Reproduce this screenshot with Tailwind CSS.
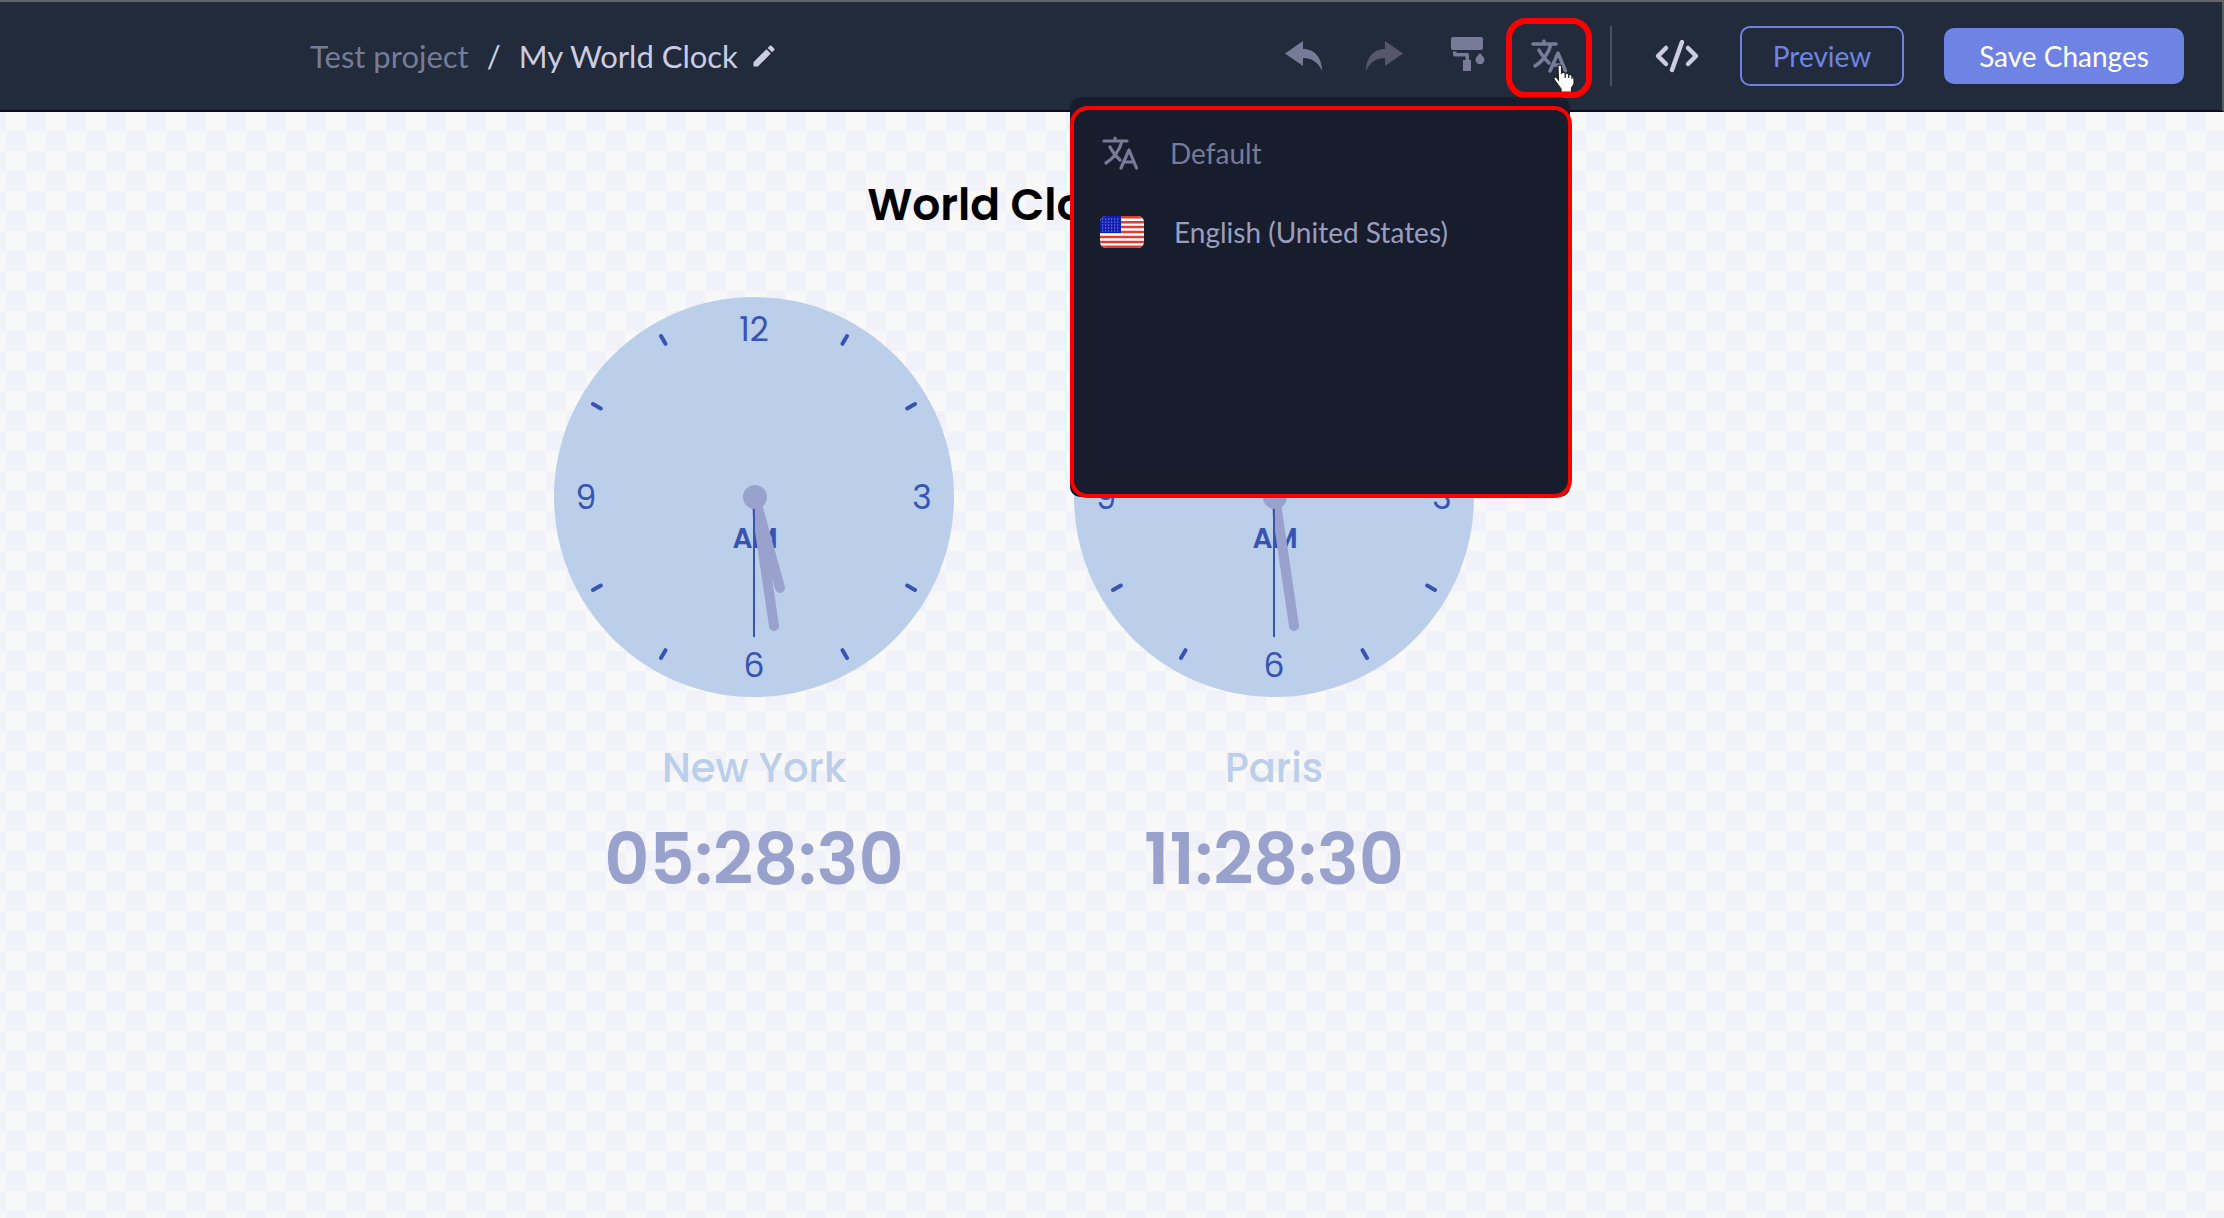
<!DOCTYPE html>
<html lang="en">
<head>
  <meta charset="UTF-8">
  <meta name="viewport" content="width=device-width, initial-scale=1.0">
  <title>My World Clock</title>
  <script src="https://cdn.jsdelivr.net/npm/@tailwindcss/browser@4"></script>
</head>
<body class="min-h-screen flex flex-col bg-[#f8f8f8] font-['Lato',sans-serif]">

  <!-- Top bar -->
  <header class="h-28 shrink-0 flex items-center justify-between pl-[310px] pr-[38px] bg-[#212b3b] border-t-2 border-t-[#666666] border-b-2 border-b-[#0a0c20] border-r-2 border-r-[#575d66]">
    <nav class="flex items-center text-[31px] leading-10 text-[#cccde3]">
      <a href="#" class="text-[#777b97]">Test project</a>
      <span class="mx-[18px]">/</span>
      <span>My World Clock</span>
      <button type="button" aria-label="Rename" class="ml-3">
        <svg class="size-7" viewBox="0 0 24 24" fill="currentColor"><path d="M3 17.25V21h3.75L17.81 9.94l-3.75-3.75L3 17.25zM20.71 7.04a1 1 0 0 0 0-1.41l-2.34-2.34a1 1 0 0 0-1.41 0l-1.83 1.83 3.75 3.75 1.83-1.83z"/></svg>
      </button>
    </nav>

    <div class="flex items-center">
      <button type="button" aria-label="Undo" class="mr-11 text-[#777b97]">
        <svg class="w-[37px] h-[30px]" viewBox="0 0 37 30" fill="currentColor"><path d="M0 12.500 18 0v8C30 8 37 17 37 30 33 21 27 17 18 17v8z"/></svg>
      </button>
      <button type="button" aria-label="Redo" class="mr-12 text-[#55566a]">
        <svg class="w-[37px] h-[30px]" viewBox="0 0 37 30" fill="currentColor"><path d="M37 12.500 19 0v8C7 8 0 17 0 30 4 21 10 17 19 17v8z"/></svg>
      </button>
      <button type="button" aria-label="Theme" class="mr-5 pb-1 text-[#777b97]">
        <svg class="w-[35px] h-[34px]" viewBox="0 0 35 34" fill="currentColor"><rect width="32" height="13" rx="2"/><path d="M2 14.500h3.500V16H16a2 2 0 0 1 2 2v5h2v11h-8V23h2.500v-3.500H4a2 2 0 0 1-2-2zM29 16c2.500 3 4.500 4.500 4.500 6.800a4.500 4.500 0 0 1-9 0C24.500 20.500 26.500 19 29 16z"/></svg>
      </button>

      <div class="relative mt-1">
        <button type="button" aria-label="Languages" aria-expanded="true" class="flex w-[86px] h-20 items-center justify-center rounded-[20px] border-6 border-[#ff0000] pb-1 text-[#777b97]">
          <svg class="w-9 h-[34px]" viewBox="0 0 36 34" fill="none" stroke="currentColor" stroke-width="3.500" stroke-linecap="round" stroke-linejoin="round"><path d="M2 5h23M13 2v3M20 5C18 14 11 23 4 27M8 11c3 6 7 10 10 13M19 32l8-18 7.500 18M22 26h10"/></svg>
        </button>
        <svg class="absolute left-[46px] top-[46px] w-[24px] h-[28px]" viewBox="0 0 24 28" aria-hidden="true"><path d="M6 2c0-1.300 3.500-1.300 3.500 0v7c1-1.200 3.500-.8 3.700.7 1-.9 3.300-.4 3.500 1 1.200-.7 3.300 0 3.300 1.800.9 0 2 .8 2 2.200V20l-2.500 4v4H9v-3l-6.500-9C1 13.500 3 12 4.500 13.500L6.500 16z" fill="#fff" stroke="#222" stroke-width="1.200"/><path d="M13.200 10v4M16.700 11v3M20 12.500V15" stroke="#222" stroke-width="1.200"/></svg>

        <!-- Language menu -->
        <div class="absolute z-10 right-[22px] top-[79px] w-[500px] h-[400px] rounded-[10px] bg-[#171d2d]">
          <ul class="flex flex-col pt-[26px] text-[28px] leading-[60px]">
            <li>
              <button type="button" class="flex w-full items-center gap-8 pl-8 text-[#777b97]">
                <svg class="w-9 h-[34px]" viewBox="0 0 36 34" fill="none" stroke="currentColor" stroke-width="3.200" stroke-linecap="round" stroke-linejoin="round"><path d="M2 5h23M13 2v3M20 5C18 14 11 23 4 27M8 11c3 6 7 10 10 13M19 32l8-18 7.500 18M22 26h10"/></svg>
                <span>Default</span>
              </button>
            </li>
            <li class="pt-[19px]">
              <button type="button" class="flex w-full items-center gap-[30px] pl-[30px] text-[#9a9dbe]">
                <svg class="w-11 h-8 rounded-md" viewBox="0 0 44 32">
                  <rect width="44" height="32" fill="#fff"/>
                  <path d="M0 1.200h44M0 6.200h44M0 11.100h44M0 16h44M0 20.900h44M0 25.900h44M0 30.800h44" stroke="#e03c32" stroke-width="2.500"/>
                  <rect width="21" height="17" fill="#1220b0"/>
                  <path d="M2 3h18M2 6h18M2 9h18M2 12h18M2 15h18" stroke="#8c96e0" stroke-width="1.200" stroke-dasharray="1.200 1.800"/>
                </svg>
                <span>English (United States)</span>
              </button>
            </li>
          </ul>
          <div class="absolute left-0 top-[9px] w-[502px] h-[392px] rounded-[18px] border-4 border-[#ff0000] pointer-events-none"></div>
        </div>
      </div>

      <div class="ml-[18px] mr-[42px] w-[2px] h-[60px] bg-[#4c4f62]"></div>
      <button type="button" aria-label="Source code" class="mr-10 text-[#cccde3]">
        <svg class="w-[46px] h-[34px]" viewBox="0 0 46 34" fill="none" stroke="currentColor" stroke-width="4.500" stroke-linecap="round" stroke-linejoin="round"><path d="M12 9l-8 8 8 8M34 9l8 8-8 8M28 3l-10 28"/></svg>
      </button>
      <button type="button" class="mr-10 w-[164px] h-[60px] rounded-[10px] border-2 border-[#6f83e5] text-[28px] text-[#6f83e5]">Preview</button>
      <button type="button" class="w-60 h-14 rounded-[10px] bg-[#6f83e5] text-[28px] text-white">Save Changes</button>
    </div>
  </header>

  <!-- Widget canvas -->
  <main class="grow flex flex-col items-center pt-[65px] pr-[196px] font-['Poppins','Inter',sans-serif] bg-[repeating-conic-gradient(#f1f1fa_0_25%,#f8f8f8_0_50%)] bg-size-[40px_40px] bg-position-[6px_-1px]">
    <h1 class="text-[44px] leading-[56px] font-semibold text-black">World Clocks</h1>

    <div class="flex gap-[120px] pt-16">
      <section class="flex w-[400px] flex-col items-center">
        <svg class="size-[400px]" viewBox="-200 -200 400 400" role="img" aria-label="New York time">
          <circle r="200" fill="#bbcfea"/>
          <path d="M93 -161l-4.500 7.800M161 -93l-7.800 4.500M161 93l-7.800 -4.500M93 161l-4.500 -7.800M-93 161l4.500 -7.800M-161 93l7.800 -4.500M-161 -93l7.800 4.500M-93 -161l4.500 7.800" stroke="#3754b3" stroke-width="4" stroke-linecap="round"/>
          <g fill="#3754b3" font-size="33" text-anchor="middle">
            <text x="0" y="-156">12</text>
            <text x="168" y="12">3</text>
            <text x="0" y="180">6</text>
            <text x="-168" y="12">9</text>
            <text x="1" y="51" font-size="28" font-weight="600">AM</text>
          </g>
          <path d="M1 0L26 91M1 0L20 129" stroke="#98a2cc" stroke-width="10" stroke-linecap="round"/>
          <path d="M0 0V140" stroke="#3754b3" stroke-width="2"/>
          <circle cx="1" r="12" fill="#98a2cc"/>
        </svg>
        <h2 class="pt-[45px] text-[40px] leading-[52px] font-medium text-[#bbcfea]">New York</h2>
        <p class="pt-6 text-[70px] leading-[84px] font-semibold text-[#98a2cc]">05:28:30</p>
      </section>

      <section class="flex w-[400px] flex-col items-center">
        <svg class="size-[400px]" viewBox="-200 -200 400 400" role="img" aria-label="Paris time">
          <circle r="200" fill="#bbcfea"/>
          <path d="M93 -161l-4.500 7.800M161 -93l-7.800 4.500M161 93l-7.800 -4.500M93 161l-4.500 -7.800M-93 161l4.500 -7.800M-161 93l7.800 -4.500M-161 -93l7.800 4.500M-93 -161l4.500 7.800" stroke="#3754b3" stroke-width="4" stroke-linecap="round"/>
          <g fill="#3754b3" font-size="33" text-anchor="middle">
            <text x="0" y="-156">12</text>
            <text x="168" y="12">3</text>
            <text x="0" y="180">6</text>
            <text x="-168" y="12">9</text>
            <text x="1" y="51" font-size="28" font-weight="600">AM</text>
          </g>
          <path d="M1 0L-25 -91M1 0L20 129" stroke="#98a2cc" stroke-width="10" stroke-linecap="round"/>
          <path d="M0 0V140" stroke="#3754b3" stroke-width="2"/>
          <circle cx="1" r="12" fill="#98a2cc"/>
        </svg>
        <h2 class="pt-[45px] text-[40px] leading-[52px] font-medium text-[#bbcfea]">Paris</h2>
        <p class="pt-6 text-[70px] leading-[84px] font-semibold text-[#98a2cc]">11:28:30</p>
      </section>
    </div>
  </main>

</body>
</html>
